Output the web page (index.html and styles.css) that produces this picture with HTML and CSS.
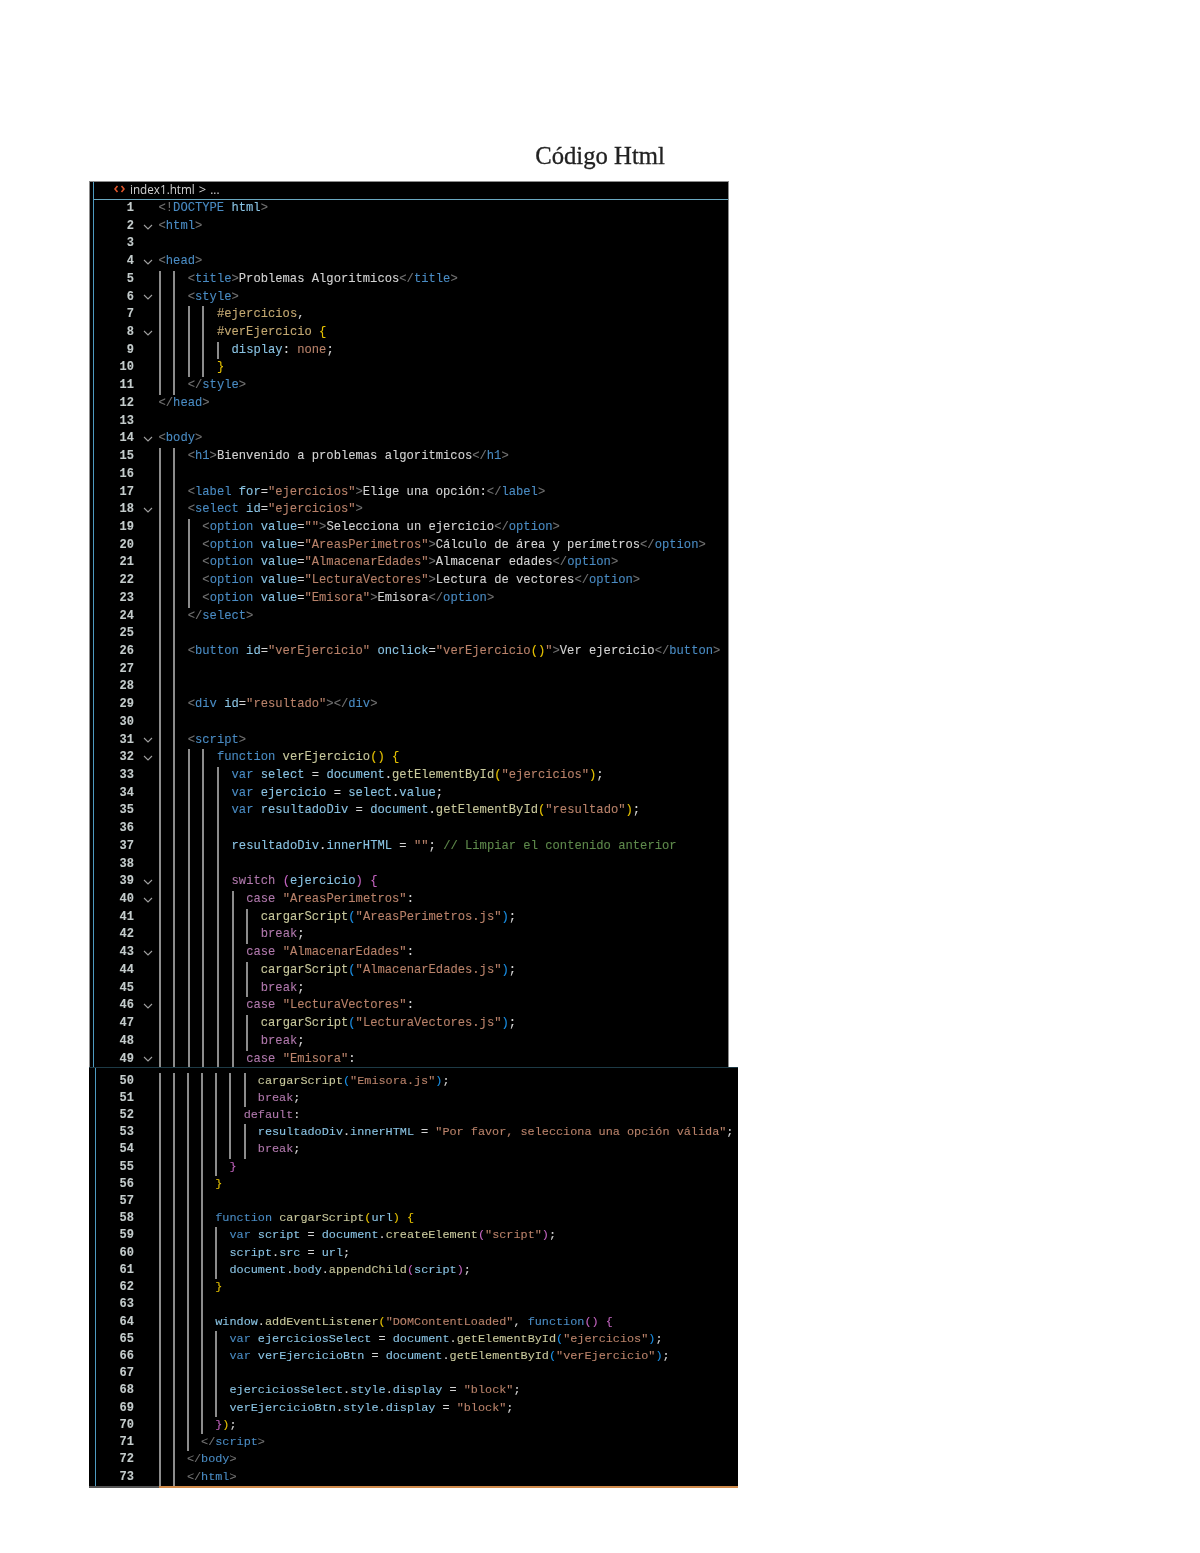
FILE: index.html
```html
<!DOCTYPE html>
<html lang="es">
<head>
<meta charset="utf-8">
<title>Código Html</title>
<link rel="stylesheet" href="styles.css">
</head>
<body>
<h1 class="title">Código Html</h1>
<section class="panel top">
<div class="inner">
<div class="tab"><svg class="file" viewBox="0 0 11 8"><path d="M3.5 1 1 4l2.5 3M7.5 1 10 4 7.5 7"/></svg><span>index1.html</span><span class="crumb">&gt;</span><span>...</span></div>
<div class="ln"><b>1</b><em></em><span class="t"><s class="o">&lt;!</s><s class="k">DOCTYPE</s> <s class="a">html</s><s class="o">&gt;</s></span></div>
<div class="ln"><b>2</b><em><svg viewBox="0 0 10 6"><path d="M1 1l4 4 4-4"/></svg></em><span class="t"><s class="o">&lt;</s><s class="k">html</s><s class="o">&gt;</s></span></div>
<div class="ln"><b>3</b><em></em></div>
<div class="ln"><b>4</b><em><svg viewBox="0 0 10 6"><path d="M1 1l4 4 4-4"/></svg></em><span class="t"><s class="o">&lt;</s><s class="k">head</s><s class="o">&gt;</s></span></div>
<div class="ln"><b>5</b><em></em><i></i><i></i><span class="t"><s class="o">&lt;</s><s class="k">title</s><s class="o">&gt;</s><s class="w">Problemas Algoritmicos</s><s class="o">&lt;/</s><s class="k">title</s><s class="o">&gt;</s></span></div>
<div class="ln"><b>6</b><em><svg viewBox="0 0 10 6"><path d="M1 1l4 4 4-4"/></svg></em><i></i><i></i><span class="t"><s class="o">&lt;</s><s class="k">style</s><s class="o">&gt;</s></span></div>
<div class="ln"><b>7</b><em></em><i></i><i></i><i></i><i></i><span class="t"><s class="h">#ejercicios</s><s class="w">,</s></span></div>
<div class="ln"><b>8</b><em><svg viewBox="0 0 10 6"><path d="M1 1l4 4 4-4"/></svg></em><i></i><i></i><i></i><i></i><span class="t"><s class="h">#verEjercicio</s> <s class="y">{</s></span></div>
<div class="ln"><b>9</b><em></em><i></i><i></i><i></i><i></i><i></i><span class="t"><s class="a">display</s><s class="w">:</s> <s class="r">none</s><s class="w">;</s></span></div>
<div class="ln"><b>10</b><em></em><i></i><i></i><i></i><i></i><span class="t"><s class="y">}</s></span></div>
<div class="ln"><b>11</b><em></em><i></i><i></i><span class="t"><s class="o">&lt;/</s><s class="k">style</s><s class="o">&gt;</s></span></div>
<div class="ln"><b>12</b><em></em><span class="t"><s class="o">&lt;/</s><s class="k">head</s><s class="o">&gt;</s></span></div>
<div class="ln"><b>13</b><em></em></div>
<div class="ln"><b>14</b><em><svg viewBox="0 0 10 6"><path d="M1 1l4 4 4-4"/></svg></em><span class="t"><s class="o">&lt;</s><s class="k">body</s><s class="o">&gt;</s></span></div>
<div class="ln"><b>15</b><em></em><i></i><i></i><span class="t"><s class="o">&lt;</s><s class="k">h1</s><s class="o">&gt;</s><s class="w">Bienvenido a problemas algoritmicos</s><s class="o">&lt;/</s><s class="k">h1</s><s class="o">&gt;</s></span></div>
<div class="ln"><b>16</b><em></em><i></i><i></i></div>
<div class="ln"><b>17</b><em></em><i></i><i></i><span class="t"><s class="o">&lt;</s><s class="k">label</s> <s class="a">for</s><s class="w">=</s><s class="r">"ejercicios"</s><s class="o">&gt;</s><s class="w">Elige una opción:</s><s class="o">&lt;/</s><s class="k">label</s><s class="o">&gt;</s></span></div>
<div class="ln"><b>18</b><em><svg viewBox="0 0 10 6"><path d="M1 1l4 4 4-4"/></svg></em><i></i><i></i><span class="t"><s class="o">&lt;</s><s class="k">select</s> <s class="a">id</s><s class="w">=</s><s class="r">"ejercicios"</s><s class="o">&gt;</s></span></div>
<div class="ln"><b>19</b><em></em><i></i><i></i><i></i><span class="t"><s class="o">&lt;</s><s class="k">option</s> <s class="a">value</s><s class="w">=</s><s class="r">""</s><s class="o">&gt;</s><s class="w">Selecciona un ejercicio</s><s class="o">&lt;/</s><s class="k">option</s><s class="o">&gt;</s></span></div>
<div class="ln"><b>20</b><em></em><i></i><i></i><i></i><span class="t"><s class="o">&lt;</s><s class="k">option</s> <s class="a">value</s><s class="w">=</s><s class="r">"AreasPerimetros"</s><s class="o">&gt;</s><s class="w">Cálculo de área y perímetros</s><s class="o">&lt;/</s><s class="k">option</s><s class="o">&gt;</s></span></div>
<div class="ln"><b>21</b><em></em><i></i><i></i><i></i><span class="t"><s class="o">&lt;</s><s class="k">option</s> <s class="a">value</s><s class="w">=</s><s class="r">"AlmacenarEdades"</s><s class="o">&gt;</s><s class="w">Almacenar edades</s><s class="o">&lt;/</s><s class="k">option</s><s class="o">&gt;</s></span></div>
<div class="ln"><b>22</b><em></em><i></i><i></i><i></i><span class="t"><s class="o">&lt;</s><s class="k">option</s> <s class="a">value</s><s class="w">=</s><s class="r">"LecturaVectores"</s><s class="o">&gt;</s><s class="w">Lectura de vectores</s><s class="o">&lt;/</s><s class="k">option</s><s class="o">&gt;</s></span></div>
<div class="ln"><b>23</b><em></em><i></i><i></i><i></i><span class="t"><s class="o">&lt;</s><s class="k">option</s> <s class="a">value</s><s class="w">=</s><s class="r">"Emisora"</s><s class="o">&gt;</s><s class="w">Emisora</s><s class="o">&lt;/</s><s class="k">option</s><s class="o">&gt;</s></span></div>
<div class="ln"><b>24</b><em></em><i></i><i></i><span class="t"><s class="o">&lt;/</s><s class="k">select</s><s class="o">&gt;</s></span></div>
<div class="ln"><b>25</b><em></em><i></i><i></i></div>
<div class="ln"><b>26</b><em></em><i></i><i></i><span class="t"><s class="o">&lt;</s><s class="k">button</s> <s class="a">id</s><s class="w">=</s><s class="r">"verEjercicio"</s> <s class="a">onclick</s><s class="w">=</s><s class="r">"verEjercicio</s><s class="y">()</s><s class="r">"</s><s class="o">&gt;</s><s class="w">Ver ejercicio</s><s class="o">&lt;/</s><s class="k">button</s><s class="o">&gt;</s></span></div>
<div class="ln"><b>27</b><em></em><i></i><i></i></div>
<div class="ln"><b>28</b><em></em><i></i><i></i></div>
<div class="ln"><b>29</b><em></em><i></i><i></i><span class="t"><s class="o">&lt;</s><s class="k">div</s> <s class="a">id</s><s class="w">=</s><s class="r">"resultado"</s><s class="o">&gt;&lt;/</s><s class="k">div</s><s class="o">&gt;</s></span></div>
<div class="ln"><b>30</b><em></em><i></i><i></i></div>
<div class="ln"><b>31</b><em><svg viewBox="0 0 10 6"><path d="M1 1l4 4 4-4"/></svg></em><i></i><i></i><span class="t"><s class="o">&lt;</s><s class="k">script</s><s class="o">&gt;</s></span></div>
<div class="ln"><b>32</b><em><svg viewBox="0 0 10 6"><path d="M1 1l4 4 4-4"/></svg></em><i></i><i></i><i></i><i></i><span class="t"><s class="k">function</s> <s class="f">verEjercicio</s><s class="y">() {</s></span></div>
<div class="ln"><b>33</b><em></em><i></i><i></i><i></i><i></i><i></i><span class="t"><s class="k">var</s> <s class="a">select</s> <s class="w">=</s> <s class="a">document</s><s class="w">.</s><s class="f">getElementById</s><s class="y">(</s><s class="r">"ejercicios"</s><s class="y">)</s><s class="w">;</s></span></div>
<div class="ln"><b>34</b><em></em><i></i><i></i><i></i><i></i><i></i><span class="t"><s class="k">var</s> <s class="a">ejercicio</s> <s class="w">=</s> <s class="a">select</s><s class="w">.</s><s class="a">value</s><s class="w">;</s></span></div>
<div class="ln"><b>35</b><em></em><i></i><i></i><i></i><i></i><i></i><span class="t"><s class="k">var</s> <s class="a">resultadoDiv</s> <s class="w">=</s> <s class="a">document</s><s class="w">.</s><s class="f">getElementById</s><s class="y">(</s><s class="r">"resultado"</s><s class="y">)</s><s class="w">;</s></span></div>
<div class="ln"><b>36</b><em></em><i></i><i></i><i></i><i></i><i></i></div>
<div class="ln"><b>37</b><em></em><i></i><i></i><i></i><i></i><i></i><span class="t"><s class="a">resultadoDiv</s><s class="w">.</s><s class="a">innerHTML</s> <s class="w">=</s> <s class="r">""</s><s class="w">;</s> <s class="c">// Limpiar el contenido anterior</s></span></div>
<div class="ln"><b>38</b><em></em><i></i><i></i><i></i><i></i><i></i></div>
<div class="ln"><b>39</b><em><svg viewBox="0 0 10 6"><path d="M1 1l4 4 4-4"/></svg></em><i></i><i></i><i></i><i></i><i></i><span class="t"><s class="p">switch</s> <s class="m">(</s><s class="a">ejercicio</s><s class="m">) {</s></span></div>
<div class="ln"><b>40</b><em><svg viewBox="0 0 10 6"><path d="M1 1l4 4 4-4"/></svg></em><i></i><i></i><i></i><i></i><i></i><i></i><span class="t"><s class="p">case</s> <s class="r">"AreasPerimetros"</s><s class="w">:</s></span></div>
<div class="ln"><b>41</b><em></em><i></i><i></i><i></i><i></i><i></i><i></i><i></i><span class="t"><s class="f">cargarScript</s><s class="l">(</s><s class="r">"AreasPerimetros.js"</s><s class="l">)</s><s class="w">;</s></span></div>
<div class="ln"><b>42</b><em></em><i></i><i></i><i></i><i></i><i></i><i></i><i></i><span class="t"><s class="p">break</s><s class="w">;</s></span></div>
<div class="ln"><b>43</b><em><svg viewBox="0 0 10 6"><path d="M1 1l4 4 4-4"/></svg></em><i></i><i></i><i></i><i></i><i></i><i></i><span class="t"><s class="p">case</s> <s class="r">"AlmacenarEdades"</s><s class="w">:</s></span></div>
<div class="ln"><b>44</b><em></em><i></i><i></i><i></i><i></i><i></i><i></i><i></i><span class="t"><s class="f">cargarScript</s><s class="l">(</s><s class="r">"AlmacenarEdades.js"</s><s class="l">)</s><s class="w">;</s></span></div>
<div class="ln"><b>45</b><em></em><i></i><i></i><i></i><i></i><i></i><i></i><i></i><span class="t"><s class="p">break</s><s class="w">;</s></span></div>
<div class="ln"><b>46</b><em><svg viewBox="0 0 10 6"><path d="M1 1l4 4 4-4"/></svg></em><i></i><i></i><i></i><i></i><i></i><i></i><span class="t"><s class="p">case</s> <s class="r">"LecturaVectores"</s><s class="w">:</s></span></div>
<div class="ln"><b>47</b><em></em><i></i><i></i><i></i><i></i><i></i><i></i><i></i><span class="t"><s class="f">cargarScript</s><s class="l">(</s><s class="r">"LecturaVectores.js"</s><s class="l">)</s><s class="w">;</s></span></div>
<div class="ln"><b>48</b><em></em><i></i><i></i><i></i><i></i><i></i><i></i><i></i><span class="t"><s class="p">break</s><s class="w">;</s></span></div>
<div class="ln"><b>49</b><em><svg viewBox="0 0 10 6"><path d="M1 1l4 4 4-4"/></svg></em><i></i><i></i><i></i><i></i><i></i><i></i><span class="t"><s class="p">case</s> <s class="r">"Emisora"</s><s class="w">:</s></span></div>
</div>
</section>
<section class="panel bottom">
<div class="inner">
<div class="ln"><b>50</b><em></em><i></i><i></i><i></i><i></i><i></i><i></i><i></i><span class="t"><s class="f">cargarScript</s><s class="l">(</s><s class="r">"Emisora.js"</s><s class="l">)</s><s class="w">;</s></span></div>
<div class="ln"><b>51</b><em></em><i></i><i></i><i></i><i></i><i></i><i></i><i></i><span class="t"><s class="p">break</s><s class="w">;</s></span></div>
<div class="ln"><b>52</b><em></em><i></i><i></i><i></i><i></i><i></i><i></i><span class="t"><s class="p">default</s><s class="w">:</s></span></div>
<div class="ln"><b>53</b><em></em><i></i><i></i><i></i><i></i><i></i><i></i><i></i><span class="t"><s class="a">resultadoDiv</s><s class="w">.</s><s class="a">innerHTML</s> <s class="w">=</s> <s class="r">"Por favor, selecciona una opción válida"</s><s class="w">;</s></span></div>
<div class="ln"><b>54</b><em></em><i></i><i></i><i></i><i></i><i></i><i></i><i></i><span class="t"><s class="p">break</s><s class="w">;</s></span></div>
<div class="ln"><b>55</b><em></em><i></i><i></i><i></i><i></i><i></i><span class="t"><s class="m">}</s></span></div>
<div class="ln"><b>56</b><em></em><i></i><i></i><i></i><i></i><span class="t"><s class="y">}</s></span></div>
<div class="ln"><b>57</b><em></em><i></i><i></i><i></i><i></i></div>
<div class="ln"><b>58</b><em></em><i></i><i></i><i></i><i></i><span class="t"><s class="k">function</s> <s class="f">cargarScript</s><s class="y">(</s><s class="a">url</s><s class="y">) {</s></span></div>
<div class="ln"><b>59</b><em></em><i></i><i></i><i></i><i></i><i></i><span class="t"><s class="k">var</s> <s class="a">script</s> <s class="w">=</s> <s class="a">document</s><s class="w">.</s><s class="f">createElement</s><s class="m">(</s><s class="r">"script"</s><s class="m">)</s><s class="w">;</s></span></div>
<div class="ln"><b>60</b><em></em><i></i><i></i><i></i><i></i><i></i><span class="t"><s class="a">script</s><s class="w">.</s><s class="a">src</s> <s class="w">=</s> <s class="a">url</s><s class="w">;</s></span></div>
<div class="ln"><b>61</b><em></em><i></i><i></i><i></i><i></i><i></i><span class="t"><s class="a">document</s><s class="w">.</s><s class="a">body</s><s class="w">.</s><s class="f">appendChild</s><s class="m">(</s><s class="a">script</s><s class="m">)</s><s class="w">;</s></span></div>
<div class="ln"><b>62</b><em></em><i></i><i></i><i></i><i></i><span class="t"><s class="y">}</s></span></div>
<div class="ln"><b>63</b><em></em><i></i><i></i><i></i><i></i></div>
<div class="ln"><b>64</b><em></em><i></i><i></i><i></i><i></i><span class="t"><s class="a">window</s><s class="w">.</s><s class="f">addEventListener</s><s class="y">(</s><s class="r">"DOMContentLoaded"</s><s class="w">,</s> <s class="k">function</s><s class="m">() {</s></span></div>
<div class="ln"><b>65</b><em></em><i></i><i></i><i></i><i></i><i></i><span class="t"><s class="k">var</s> <s class="a">ejerciciosSelect</s> <s class="w">=</s> <s class="a">document</s><s class="w">.</s><s class="f">getElementById</s><s class="l">(</s><s class="r">"ejercicios"</s><s class="l">)</s><s class="w">;</s></span></div>
<div class="ln"><b>66</b><em></em><i></i><i></i><i></i><i></i><i></i><span class="t"><s class="k">var</s> <s class="a">verEjercicioBtn</s> <s class="w">=</s> <s class="a">document</s><s class="w">.</s><s class="f">getElementById</s><s class="l">(</s><s class="r">"verEjercicio"</s><s class="l">)</s><s class="w">;</s></span></div>
<div class="ln"><b>67</b><em></em><i></i><i></i><i></i><i></i><i></i></div>
<div class="ln"><b>68</b><em></em><i></i><i></i><i></i><i></i><i></i><span class="t"><s class="a">ejerciciosSelect</s><s class="w">.</s><s class="a">style</s><s class="w">.</s><s class="a">display</s> <s class="w">=</s> <s class="r">"block"</s><s class="w">;</s></span></div>
<div class="ln"><b>69</b><em></em><i></i><i></i><i></i><i></i><i></i><span class="t"><s class="a">verEjercicioBtn</s><s class="w">.</s><s class="a">style</s><s class="w">.</s><s class="a">display</s> <s class="w">=</s> <s class="r">"block"</s><s class="w">;</s></span></div>
<div class="ln"><b>70</b><em></em><i></i><i></i><i></i><i></i><span class="t"><s class="m">}</s><s class="y">)</s><s class="w">;</s></span></div>
<div class="ln"><b>71</b><em></em><i></i><i></i><i></i><span class="t"><s class="o">&lt;/</s><s class="k">script</s><s class="o">&gt;</s></span></div>
<div class="ln"><b>72</b><em></em><i></i><i></i><span class="t"><s class="o">&lt;/</s><s class="k">body</s><s class="o">&gt;</s></span></div>
<div class="ln"><b>73</b><em></em><i></i><i></i><span class="t"><s class="o">&lt;/</s><s class="k">html</s><s class="o">&gt;</s></span></div>
</div>
<div class="foot"><span class="foot-left"></span><span class="foot-right"></span></div>
</section>
</body>
</html>
```
FILE: styles.css
```css
* { box-sizing: border-box; }
html, body { margin: 0; background: #fff; }
body { padding-top: 142px; height: 1553px; overflow: hidden; }

.title {
  margin: 0;
  height: 39px;
  font: 400 24.7px/28px "Liberation Serif", serif;
  -webkit-text-stroke: 0.3px #222;
  color: #222;
  text-align: center;
  filter: blur(0.4px);
}

.panel {
  margin-left: 89px;
  background: #000;
  font-family: "Liberation Mono", monospace;
  -webkit-text-stroke: 0.1px;
  filter: blur(0.5px);
}
.top {
  width: 640px;
  height: 886px;
  padding-left: 3px;
  border: 1px solid #8c8c8c;
  border-width: 1px 1px 0 1px;
  font-size: 12.17px;
  --pitch: 17.73px;
  --unit: 14.62px;
}
.top .inner { height: 100%; border-left: 1px solid #4d9ac0; }
.bottom {
  width: 649px;
  height: 420px;
  border-top: 1px solid #1d3a46;
  font-size: 11.83px;
  --pitch: 17.22px;
  --unit: 14.2px;
  display: flex;
  flex-direction: column;
}
.bottom .inner {
  flex: 1;
  margin-left: 6px;
  padding-top: 4.5px;
  border-left: 1px solid #4d9ac0;
}

.tab {
  display: flex;
  align-items: center;
  height: 18px;
  padding: 0 0 3px 20px;
  border-bottom: 1px solid #6aa8c0;
  font: 11.7px/14px "Open Sans", sans-serif;
  -webkit-text-stroke: 0;
  color: #d0d0d0;
}
.file { width: 11px; height: 8px; margin-right: 5px; }
.file path { fill: none; stroke: #e0562c; stroke-width: 1.6; }
.crumb { margin: 0 4px; font-size: 13px; }

.ln {
  display: flex;
  height: var(--pitch);
  line-height: var(--pitch);
  white-space: pre;
}
.ln b {
  flex: none;
  width: 40px;
  text-align: right;
  color: #c4cccc;
  font-weight: 700;
  font-size: 12px;
}
.bottom .ln b { width: 38px; }
.ln em {
  flex: none;
  width: 24.5px;
  display: flex;
  align-items: center;
  padding-left: 9px;
}
.ln em svg { width: 10px; height: 6px; }
.ln em path { fill: none; stroke: #a0a0a0; stroke-width: 1.1; }
.ln i {
  flex: none;
  width: var(--unit);
  border-left: 2px solid #8c8c8c;
}
.t { flex: none; }
.t s { text-decoration: none; }

.o { color: #737373; }
.k { color: #4a8cc4; }
.a { color: #8ac4e4; }
.w { color: #d4d4d4; }
.r { color: #b9826a; }
.h { color: #c4a972; }
.f { color: #c8c89c; }
.p { color: #b078ac; }
.c { color: #5f8a4c; }
.y { color: #e6c200; }
.m { color: #c464c0; }
.l { color: #1a90e6; }

.foot { flex: none; display: flex; height: 2px; }
.foot-left { width: 70px; background: #555; }
.foot-right { flex: 1; background: #d08a4a; }
```
